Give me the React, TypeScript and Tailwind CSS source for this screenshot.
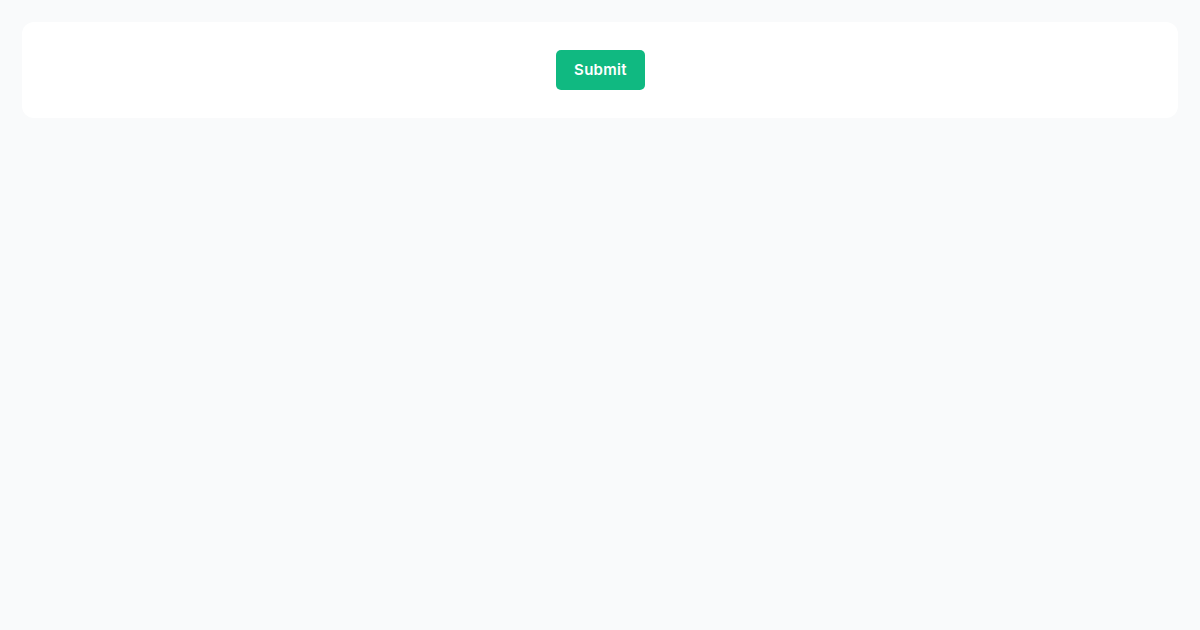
const App = () => {
  return (
    <div className="min-h-screen bg-[#f9fafb] p-[22px] font-['Inter',sans-serif]">
      <div className="bg-white rounded-xl py-7 pl-px flex justify-center">
        <button
          type="button"
          className="h-10 px-[18px] pt-px rounded-[5px] bg-[#10b981] text-white text-[15px] font-semibold tracking-[0.02em]"
        >
          Submit
        </button>
      </div>
    </div>
  );
};

export default App;
